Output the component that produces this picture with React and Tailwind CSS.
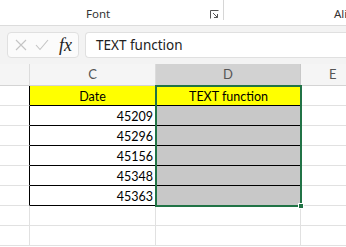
import React from "react";

const values = ["45209", "45296", "45156", "45348", "45363"];

function Launcher() {
  return (
    <svg width="9" height="9" viewBox="0 0 9 9" className="text-[#555]">
      <path d="M0.5 8.5 V0.5 H8.5" fill="none" stroke="currentColor" strokeWidth="1" />
      <path d="M3 3 L7.5 7.5 M7.5 4 V7.5 H4" fill="none" stroke="currentColor" strokeWidth="1" />
    </svg>
  );
}

function FormulaBar() {
  return (
    <div className="h-[38px] bg-[#f3f3f3] flex items-center pl-[7px]">
      <div className="w-[72px] h-[26px] shrink-0 bg-[#fbfbfb] border border-[#e0e0e0] rounded-[4px] flex items-center">
        <svg width="12" height="12" viewBox="0 0 12 12" className="ml-[7px]">
          <path d="M1 1 L11 11 M11 1 L1 11" stroke="#c4c4c4" strokeWidth="1.1" fill="none" />
        </svg>
        <svg width="14" height="12" viewBox="0 0 14 12" className="ml-[8px]">
          <path d="M1 6 L5 10.5 L13 1" stroke="#c4c4c4" strokeWidth="1.1" fill="none" />
        </svg>
        <span className="ml-[10px] text-[18px] italic text-[#222] leading-none" style={{ fontFamily: '"Liberation Serif", serif' }}>
          fx
        </span>
      </div>
      <div className="ml-[6px] flex-1 h-[26px] bg-white border border-[#e0e0e0] border-r-0 rounded-l-[4px] flex items-center pl-[10px] text-[13.5px] text-[#222]">
        TEXT function
      </div>
    </div>
  );
}

export default function App() {
  return (
    <div className="w-[346px] h-[247px] overflow-hidden bg-white" style={{ fontFamily: '"Noto Sans", sans-serif' }}>
      <div className="h-[26px] bg-white border-b border-[#dcdcdc] flex">
        <div className="w-[224px] shrink-0 flex items-center border-r border-[#d6d6d6] h-[20px] pt-[8px]">
          <span className="ml-[86px] text-[11.5px] text-[#333]">Font</span>
          <span className="ml-auto mr-[4px] flex"><Launcher /></span>
        </div>
        <div className="flex shrink-0 items-center h-[20px] pt-[8px]">
          <span className="ml-[110px] text-[11.5px] text-[#333] whitespace-nowrap">Alignment</span>
        </div>
      </div>
      <FormulaBar />
      <div className="relative" style={{ fontFamily: 'Lato, "Liberation Sans", sans-serif' }}>
        <div className="flex h-[22px] bg-[#f5f5f5] border-b border-[#d4d4d4] text-[13px] text-[#555]">
          <div className="w-[30px] border-r border-[#dcdcdc]" />
          <div className="w-[126px] border-r border-[#dcdcdc] flex items-center justify-center">C</div>
          <div className="w-[145px] bg-[#d2d2d2] border-r border-[#c8c8c8] flex items-center justify-center">D</div>
          <div className="flex-1 flex items-center pl-[28px]">E</div>
        </div>
        <div className="flex h-[20px] text-[12.5px] text-black">
          <div className="w-[30px] border-b border-[#e1e1e1] border-r border-r-black" />
          <div className="w-[126px] bg-[#ffff00] border-b border-r border-black flex items-end pb-[2px] justify-center leading-none">Date</div>
          <div className="w-[145px] bg-[#ffff00] border-b border-black flex items-end pb-[2px] justify-center leading-none">TEXT function</div>
          <div className="flex-1 border-b border-[#e1e1e1]" />
        </div>
        {values.map((v) => (
          <div key={v} className="flex h-[20px] text-[12.5px] text-black">
            <div className="w-[30px] border-b border-[#e1e1e1] border-r border-r-black" />
            <div className="w-[126px] bg-white border-b border-r border-black flex items-end pb-[2px] justify-end pr-[2px] leading-none">{v}</div>
            <div className="w-[145px] bg-[#c8c8c8] border-b border-black" />
            <div className="flex-1 border-b border-[#e1e1e1]" />
          </div>
        ))}
        {[0, 1].map((i) => (
          <div key={i} className="flex h-[20px]">
            <div className="w-[30px] border-b border-r border-[#e1e1e1]" />
            <div className="w-[126px] border-b border-r border-[#e1e1e1]" />
            <div className="w-[145px] border-b border-r border-[#e1e1e1]" />
            <div className="flex-1 border-b border-[#e1e1e1]" />
          </div>
        ))}
        <div className="absolute left-[155px] top-[21px] w-[147px] h-[122px] border-2 border-[#217346]" />
        <div className="absolute left-[298px] top-[139px] w-[6px] h-[6px] bg-[#217346] border border-white" />
      </div>
    </div>
  );
}
